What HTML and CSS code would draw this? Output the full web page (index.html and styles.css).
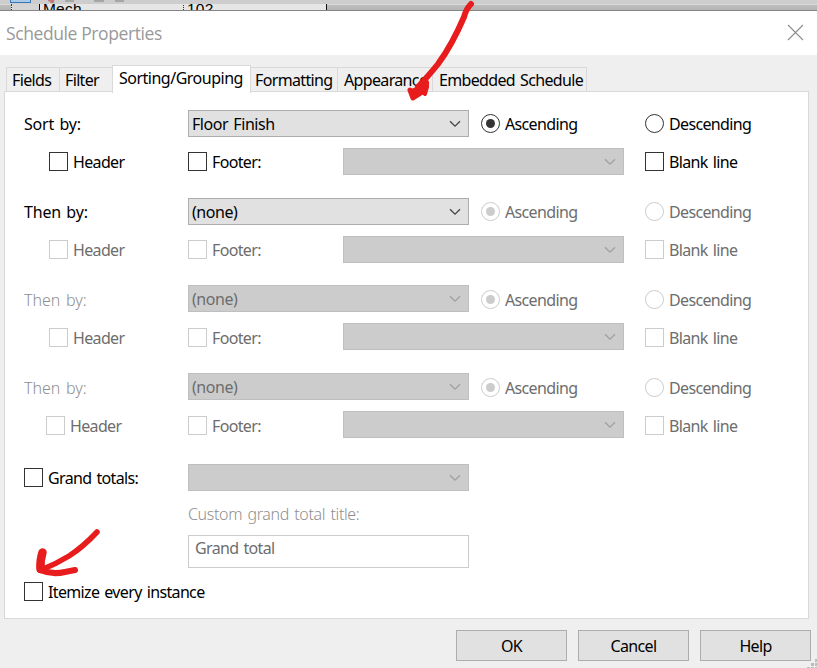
FILE: index.html
```html
<!DOCTYPE html>
<html lang="en">
<head>
    <meta charset="UTF-8">
    <meta name="viewport" content="width=device-width, initial-scale=1.0">
    <title>Schedule Properties</title>
    <link rel="stylesheet" href="styles.css">
</head>
<body>
    <svg width="0" height="0" class="defs">
        <symbol id="chevron" viewBox="0 0 12 8">
            <path d="M1 1.2 L6 6.2 L11 1.2" fill="none" stroke="currentColor" stroke-width="1.3"/>
        </symbol>
    </svg>

    <!-- strip of the window behind the dialog -->
    <div class="backdrop">
        <div class="tool"></div>
        <div class="sheet">
            <span class="cell-name">Mech</span>
            <span class="cell-number">102</span>
        </div>
        <svg class="tool-marks" width="90" height="3">
            <path d="M0 0 l6 2 M2 2 l4 -2" stroke="#c07878" stroke-width="2"/>
            <path d="M17 1 h9 M46 1 h10 M67 1 h9" stroke="#999" stroke-width="1.5"/>
        </svg>
    </div>

    <div class="titlebar">
        <h1>Schedule Properties</h1>
        <svg class="close" width="17" height="17" viewBox="0 0 17 17">
            <path d="M1 1 L16 16 M16 1 L1 16" stroke="#8c8c8c" stroke-width="1.1"/>
        </svg>
    </div>

    <div class="tabs">
        <div class="tab fields">Fields</div>
        <div class="tab filter">Filter</div>
        <div class="tab sorting active">Sorting/Grouping</div>
        <div class="tab formatting">Formatting</div>
        <div class="tab appearance">Appearance</div>
        <div class="tab embedded">Embedded Schedule</div>
    </div>

    <div class="panel">
        <div class="group">
            <div class="row sort">
                <span class="label">Sort by:</span>
                <div class="select"><span>Floor Finish</span><svg class="arrow"><use href="#chevron"/></svg></div>
                <label class="option"><i class="radio checked"></i>Ascending</label>
                <label class="option"><i class="radio"></i>Descending</label>
            </div>
            <div class="row extras">
                <label class="option header"><i class="check"></i>Header</label>
                <label class="option"><i class="check"></i>Footer:</label>
                <div class="select off"><svg class="arrow"><use href="#chevron"/></svg></div>
                <label class="option"><i class="check"></i>Blank line</label>
            </div>
        </div>

        <div class="group">
            <div class="row sort">
                <span class="label">Then by:</span>
                <div class="select"><span>(none)</span><svg class="arrow"><use href="#chevron"/></svg></div>
                <label class="option off"><i class="radio checked"></i>Ascending</label>
                <label class="option off"><i class="radio"></i>Descending</label>
            </div>
            <div class="row extras">
                <label class="option header off"><i class="check"></i>Header</label>
                <label class="option off"><i class="check"></i>Footer:</label>
                <div class="select off"><svg class="arrow"><use href="#chevron"/></svg></div>
                <label class="option off"><i class="check"></i>Blank line</label>
            </div>
        </div>

        <div class="group raised">
            <div class="row sort">
                <span class="label off">Then by:</span>
                <div class="select off"><span>(none)</span><svg class="arrow"><use href="#chevron"/></svg></div>
                <label class="option off"><i class="radio checked"></i>Ascending</label>
                <label class="option off"><i class="radio"></i>Descending</label>
            </div>
            <div class="row extras">
                <label class="option header off"><i class="check"></i>Header</label>
                <label class="option off"><i class="check"></i>Footer:</label>
                <div class="select off"><svg class="arrow"><use href="#chevron"/></svg></div>
                <label class="option off"><i class="check"></i>Blank line</label>
            </div>
        </div>

        <div class="group raised last">
            <div class="row sort">
                <span class="label off">Then by:</span>
                <div class="select off"><span>(none)</span><svg class="arrow"><use href="#chevron"/></svg></div>
                <label class="option off"><i class="radio checked"></i>Ascending</label>
                <label class="option off"><i class="radio"></i>Descending</label>
            </div>
            <div class="row extras">
                <label class="option header off"><i class="check"></i>Header</label>
                <label class="option off"><i class="check"></i>Footer:</label>
                <div class="select off"><svg class="arrow"><use href="#chevron"/></svg></div>
                <label class="option off"><i class="check"></i>Blank line</label>
            </div>
        </div>

        <div class="row sort">
            <label class="option"><i class="check"></i>Grand totals:</label>
            <div class="select off"><svg class="arrow"><use href="#chevron"/></svg></div>
        </div>
        <div class="custom">
            <span class="label off custom-label">Custom grand total title:</span>
            <div class="textbox">Grand total</div>
        </div>
        <label class="option itemize"><i class="check"></i>Itemize every instance</label>
    </div>

    <div class="buttons">
        <div class="btn">OK</div>
        <div class="btn">Cancel</div>
        <div class="btn">Help</div>
    </div>

    <svg class="grip" width="10" height="9" viewBox="0 0 10 9" fill="#bdbdbd">
        <path d="M8 0h3v3h-3z M4 4h3v3h-3z M8 4h3v3h-3z M0 8h3v1h-3z M4 8h3v1h-3z M8 8h3v1h-3z"/>
    </svg>

    <!-- red pen marks -->
    <svg class="marks" width="817" height="668" viewBox="0 0 817 668">
        <g fill="none" stroke="#e81c1c" stroke-linecap="round" stroke-linejoin="round">
            <path d="M471 4 Q466 9 464 17 Q452 45 438 64 Q430 74 418 87" stroke-width="6"/>
            <path d="M410 90 L413 98 L424 91" stroke-width="5"/>
            <path d="M427 82 L413 98 L411 91 L419 88 L425 94 L427 87 Z" fill="#e81c1c" stroke-width="4"/>
            <path d="M97 532 Q83 547 69 556 Q56 564 41 570" stroke-width="5.5"/>
            <path d="M42.5 552.5 Q40 560 40.5 569" stroke-width="8.5"/>
            <path d="M40 570 Q52 575 65 572 L75 570" stroke-width="6"/>
        </g>
    </svg>
</body>
</html>
```
FILE: styles.css
```css
* {
    box-sizing: border-box;
}
body {
    margin: 0;
    width: 817px;
    height: 668px;
    overflow: hidden;
    position: relative;
    background: #efefef;
    color: #000;
    font-family: "Noto Sans", sans-serif;
    font-size: 16px;
    letter-spacing: -0.65px;
    word-spacing: 1.5px;
    line-height: 20px;
    white-space: nowrap;
}
.defs {
    position: absolute;
}
.backdrop {
    height: 11px;
    background: linear-gradient(#cdcdcd 4px, #dadada 4px, #dadada 5px, #bdbdbd 5px, #b4b4b4 10px, #858585 10px);
    position: relative;
    overflow: hidden;
}
.tool {
    position: absolute;
    left: 10px;
    top: -4px;
    width: 21px;
    height: 7px;
    background: #a9c9e8;
    border: 1px solid #3979b8;
}
.sheet {
    position: absolute;
    left: 11px;
    top: 4px;
    width: 316px;
    height: 6px;
    background: linear-gradient(90deg, #d4d4d4 28px, #e6e6e6 28px);
    border-left: 1px dotted #333;
    border-right: 1px solid #111;
    font-family: "Liberation Sans", Arial, sans-serif;
    font-size: 15.5px;
    line-height: 14px;
    letter-spacing: 0.2px;
    word-spacing: 0;
    display: flex;
    overflow: hidden;
}
.cell-name {
    margin: -2px 0 0 27px;
    padding-left: 3px;
    width: 144px;
    border-left: 1px solid #111;
}
.cell-number {
    margin-top: -2px;
    padding-left: 3px;
    border-left: 1px dotted #333;
}
.tool-marks {
    position: absolute;
    left: 48px;
    top: 0;
}
.titlebar {
    height: 44px;
    background: #fff;
    display: flex;
    align-items: center;
    justify-content: space-between;
    padding: 0 13px 0 6px;
}
.titlebar h1 {
    margin: 0;
    font-family: "Open Sans", sans-serif;
    font-size: 17.5px;
    font-weight: 400;
    letter-spacing: -0.4px;
    word-spacing: 0;
    color: #999;
}
.close {
    margin-top: -2px;
}
.tabs {
    height: 37px;
    padding-left: 6px;
    display: flex;
    align-items: flex-end;
}
.tab {
    height: 25px;
    border: 1px solid #d9d9d9;
    border-left: none;
    border-bottom: none;
    padding: 2px 0 0 5px;
}
.fields {
    width: 54px;
    border-left: 1px solid #d9d9d9;
}
.filter {
    width: 52px;
    border-right: none;
}
.sorting {
    width: 139px;
}
.formatting {
    width: 87px;
    padding-left: 4px;
}
.appearance {
    width: 95px;
    padding-left: 6px;
}
.embedded {
    width: 154px;
    padding-left: 6px;
}
.active {
    height: 28px;
    margin-bottom: -1px;
    padding: 2px 0 0 6px;
    background: #fff;
    border-left: 1px solid #d9d9d9;
    letter-spacing: -0.5px;
    z-index: 1;
}
.panel {
    margin: -1px 8px 0 4px;
    height: 528px;
    border: 1px solid #d9d9d9;
    background: #fff;
    padding: 18px 0 0 19px;
}
.group {
    height: 88px;
}
.group.last {
    height: 90px;
}
.row {
    display: grid;
    height: 27px;
    align-items: center;
}
.sort {
    grid-template-columns: 164px 281px 164px 120px;
}
.sort .label {
    letter-spacing: -0.2px;
}
.sort .select + .option {
    margin-left: 12px;
}
.sort .option:last-child {
    margin-left: 12px;
}
.extras {
    margin-top: 11px;
    grid-template-columns: 164px 155px 281px 120px;
}
.extras .select + .option {
    margin-left: 21px;
}
.extras .header {
    padding-left: 25px;
}
.last .header {
    padding-left: 22px;
}
.option {
    display: flex;
    align-items: center;
    gap: 5px;
}
.check, .radio {
    flex: none;
    width: 19px;
    height: 19px;
    border: 1px solid #333;
    background: #fff;
}
.radio {
    border-radius: 50%;
    display: grid;
    place-items: center;
}
.radio.checked::after {
    content: "";
    width: 9px;
    height: 9px;
    border-radius: 50%;
    background: #333;
}
.option.off {
    color: #6d6d6d;
}
.off .check, .off .radio {
    border-color: #ccc;
}
.off .radio.checked::after {
    background: #ccc;
}
.label.off {
    color: #8f8f8f;
    font-weight: 300;
    letter-spacing: 0;
}
.select {
    height: 27px;
    border: 1px solid #adadad;
    background: #e1e1e1;
    padding: 0 7px 0 3px;
    display: flex;
    align-items: center;
    color: #000;
    letter-spacing: -0.45px;
}
.select.off {
    background: #ccc;
    border-color: #bfbfbf;
    color: #6d6d6d;
}
.raised .select {
    margin-top: -2px;
}
.arrow {
    width: 12px;
    height: 8px;
    margin-left: auto;
    color: #444;
}
.off .arrow {
    color: #a0a0a0;
}
.custom {
    margin: 13px 0 0 164px;
    width: 281px;
}
.label.custom-label {
    display: block;
    letter-spacing: -0.35px;
}
.textbox {
    margin-top: 11px;
    height: 33px;
    border: 1px solid #ccc;
    padding: 2px 6px;
    color: #6d6d6d;
}
.itemize {
    margin-top: 14px;
    height: 20px;
}
.itemize .check {
    margin-top: -2px;
}
.buttons {
    display: flex;
    justify-content: flex-end;
    gap: 11px;
    padding: 11px 6px 0 0;
}
.btn {
    width: 111px;
    height: 31px;
    border: 1px solid #adadad;
    background: #e1e1e1;
    display: grid;
    place-items: center;
}
.grip {
    position: absolute;
    right: 0;
    bottom: 0;
}
.marks {
    position: absolute;
    left: 0;
    top: 0;
    z-index: 2;
}
```
